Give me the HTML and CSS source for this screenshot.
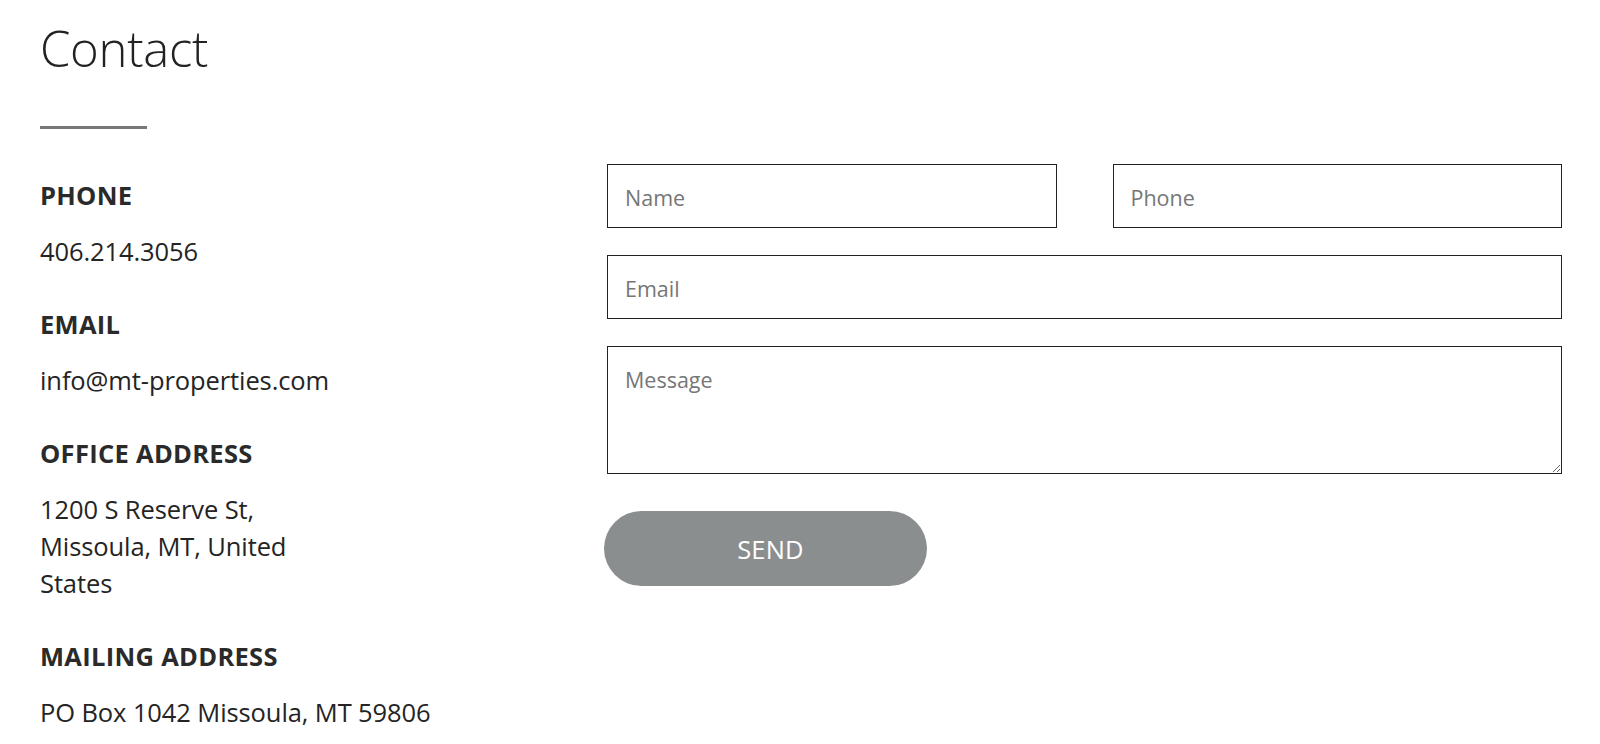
FILE: index.html
```html
<!DOCTYPE html>
<html lang="en">
<head>
<meta charset="utf-8">
<title>Contact</title>
<link rel="stylesheet" href="styles.css">
</head>
<body>
<main class="page">
  <h1 class="title">Contact</h1>
  <div class="rule"></div>
  <div class="row">
    <section class="info">
      <h3 class="label">PHONE</h3>
      <p class="value">406.214.3056</p>
      <h3 class="label">EMAIL</h3>
      <p class="value">info@mt-properties.com</p>
      <h3 class="label">OFFICE ADDRESS</h3>
      <p class="value">1200 S Reserve St,<br>Missoula, MT, United<br>States</p>
      <h3 class="label">MAILING ADDRESS</h3>
      <p class="value">PO Box 1042 Missoula, MT 59806</p>
    </section>
    <form class="form">
      <div class="pair">
        <input class="field" type="text" placeholder="Name">
        <input class="field" type="text" placeholder="Phone">
      </div>
      <input class="field" type="email" placeholder="Email">
      <textarea class="field area" placeholder="Message"></textarea>
      <button class="send" type="button">SEND</button>
    </form>
  </div>
</main>
</body>
</html>
```
FILE: styles.css
```css
* { box-sizing: border-box; }
html, body { margin: 0; padding: 0; background: #fff; }
body {
  font-family: "Open Sans", "Noto Sans", sans-serif;
  color: #242424;
}
.page {
  padding: 18px 0 0 40px;
}
.title {
  margin: 0;
  font-size: 49px;
  line-height: 60px;
  font-weight: 300;
  color: #222;
  letter-spacing: -0.3px;
}
.rule {
  width: 107px;
  height: 3px;
  background: #777;
  margin-top: 48px;
}
.row {
  display: flex;
  margin-top: 35px;
}
.info {
  width: 567px;
  flex: none;
  padding-top: 13px;
}
.label {
  margin: 0 0 19px;
  font-size: 25.5px;
  line-height: 37px;
  font-weight: 700;
  color: #2a2a2a;
  letter-spacing: 0.3px;
}
.value {
  margin: 0 0 36px;
  font-size: 25.5px;
  line-height: 37px;
  letter-spacing: -0.1px;
}
.form {
  width: 955px;
  display: flex;
  flex-direction: column;
  gap: 27px;
}
.pair {
  display: flex;
  gap: 56px;
}
.field {
  display: block;
  width: 100%;
  height: 64px;
  border: 1px solid #222;
  border-radius: 0;
  padding: 3px 17px 0;
  font-family: "Open Sans", "Noto Sans", sans-serif;
  font-size: 21.5px;
  color: #222;
  background: #fff;
  outline: none;
}
.field::placeholder { color: #767676; }
.area {
  height: 128px;
  padding: 19px 17px 17px;
  line-height: 28px;
  resize: vertical;
}
.send {
  margin-top: 10px;
  margin-left: -3px;
  width: 323px;
  height: 75px;
  border: none;
  border-radius: 38px;
  padding: 0 0 0 10px;
  background: #8a8e8f;
  color: #fff;
  font-family: "Open Sans", "Noto Sans", sans-serif;
  font-size: 25.5px;
  letter-spacing: 0.2px;
  cursor: pointer;
}
```
